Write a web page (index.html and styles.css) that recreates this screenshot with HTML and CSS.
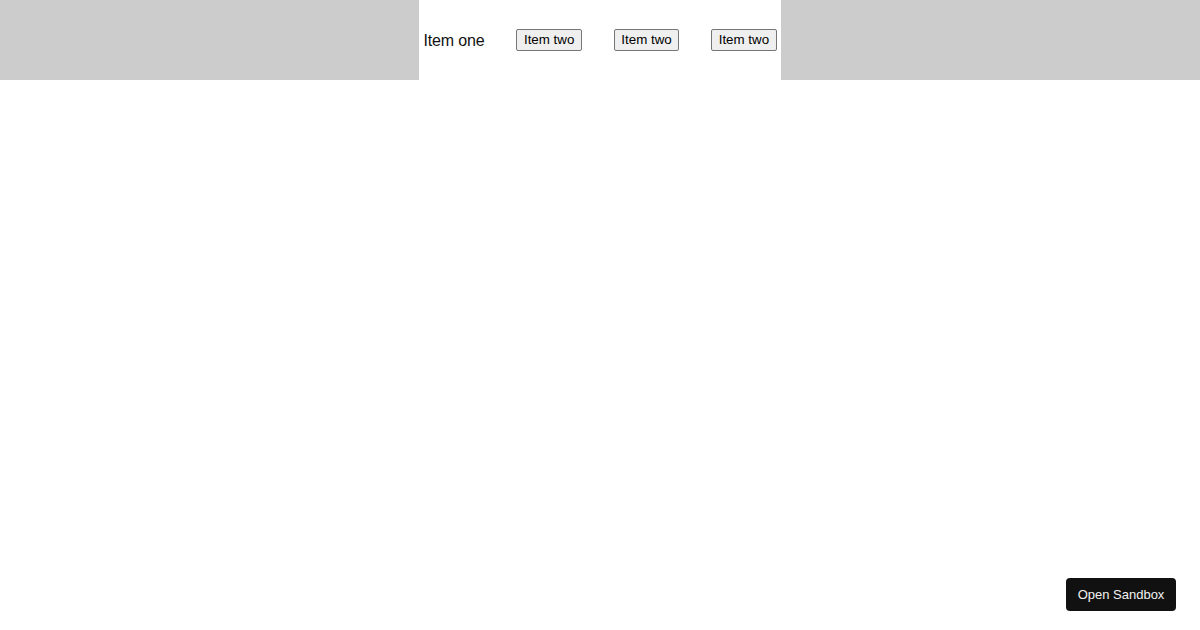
FILE: index.html
```html
<!DOCTYPE html>
<html>
<head>
<meta charset="utf-8">
<link rel="stylesheet" href="styles.css">
</head>
<body>
<header class="bar">
  <div class="side"></div>
  <nav class="items">
    <span class="item-text">Item one</span>
    <button class="item-btn">Item two</button>
    <button class="item-btn">Item two</button>
    <button class="item-btn">Item two</button>
  </nav>
  <div class="side"></div>
</header>
<button class="sandbox">Open Sandbox</button>
</body>
</html>
```
FILE: styles.css
```css
html, body {
  margin: 0;
  padding: 0;
  background: #fff;
  font-family: "Liberation Sans", Arial, sans-serif;
  color: #000;
}
.bar {
  display: flex;
  height: 80px;
}
.side {
  flex: 1;
  background: #cccccc;
}
.items {
  display: flex;
  align-items: center;
  gap: 32px;
  padding: 0 4px;
  background: #fff;
}
.item-text {
  font-size: 16px;
  letter-spacing: -0.15px;
  padding-top: 1px;
  color: #111;
}
.item-btn {
  font-family: "Liberation Sans", Arial, sans-serif;
  font-size: 13.33px;
  color: #000;
  background: #efefef;
  border: 1px solid #767676;
  border-radius: 2px;
  padding: 2px 6.5px 3px;
  margin: 0;
  line-height: 15px;
}
.sandbox {
  position: fixed;
  right: 24px;
  bottom: 19px;
  width: 110px;
  height: 33px;
  background: #111111;
  color: #f2f2f2;
  border: none;
  border-radius: 4px;
  font-family: "Liberation Sans", Arial, sans-serif;
  font-size: 13px;
  padding: 0;
}
```
